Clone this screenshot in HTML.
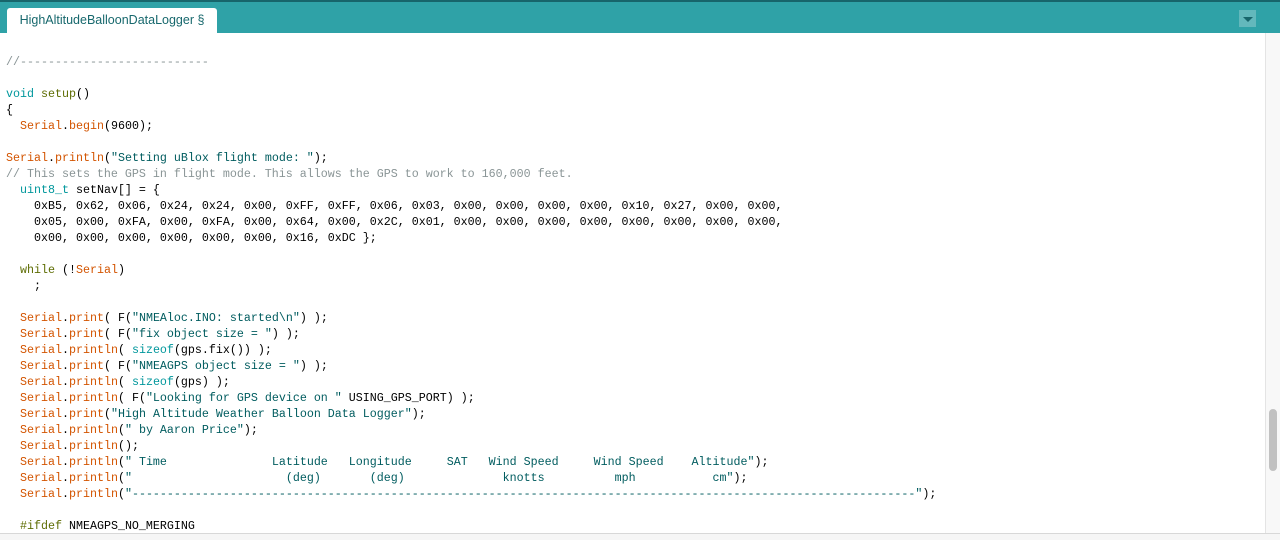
<!DOCTYPE html>
<html><head><meta charset="utf-8"><style>
*{margin:0;padding:0}
body{width:1280px;height:539px;overflow:hidden;background:#fff;position:relative;font-family:"Liberation Sans",sans-serif}
#top{position:absolute;left:0;top:0;width:1280px;height:2px;background:#17656b;z-index:3}
#bar{position:absolute;left:0;top:2px;width:1280px;height:31px;background:#2fa2a7;z-index:2}
#tab{position:absolute;left:7px;top:6px;width:210px;height:25px;background:#fff;border-radius:3px 3px 0 0;color:#17686d;font-size:12.5px;line-height:25px;text-align:center}
#dd{position:absolute;left:1239px;top:8px;width:17px;height:17px;background:#63b8bc}
#dd:after{content:"";position:absolute;left:4px;top:7px;border-left:5px solid transparent;border-right:5px solid transparent;border-top:5px solid #17656b}
pre{position:absolute;left:6px;top:22px;font-family:"Liberation Mono",monospace;font-size:11.67px;line-height:16px;color:#000}
.o{color:#d35400}.t{color:#00979c}.g{color:#5e6d03}.s{color:#005c5f}.c{color:#8a9596}
#sb{position:absolute;left:1265px;top:33px;width:15px;height:500px;background:#f8f8f8;border-left:1px solid #e4e4e4}
#th{position:absolute;left:1269px;top:409px;width:8px;height:62px;background:#c1c1c1;border-radius:4px}
#bot{position:absolute;left:0;top:533px;width:1280px;height:6px;background:#f6f6f6;border-top:1px solid #d8d8d8}
</style></head><body>
<div id="top"></div>
<div id="bar"><div id="tab">HighAltitudeBalloonDataLogger §</div><div id="dd"></div></div>
<pre>
x

<span class="c">//---------------------------</span>

<span class="t">void</span> <span class="g">setup</span>()
{
  <span class="o">Serial</span>.<span class="o">begin</span>(9600);

<span class="o">Serial</span>.<span class="o">println</span>(<span class="s">"Setting uBlox flight mode: "</span>);
<span class="c">// This sets the GPS in flight mode. This allows the GPS to work to 160,000 feet.</span>
  <span class="t">uint8_t</span> setNav[] = {
    0xB5, 0x62, 0x06, 0x24, 0x24, 0x00, 0xFF, 0xFF, 0x06, 0x03, 0x00, 0x00, 0x00, 0x00, 0x10, 0x27, 0x00, 0x00,
    0x05, 0x00, 0xFA, 0x00, 0xFA, 0x00, 0x64, 0x00, 0x2C, 0x01, 0x00, 0x00, 0x00, 0x00, 0x00, 0x00, 0x00, 0x00,
    0x00, 0x00, 0x00, 0x00, 0x00, 0x00, 0x16, 0xDC };

  <span class="g">while</span> (!<span class="o">Serial</span>)
    ;

  <span class="o">Serial</span>.<span class="o">print</span>( F(<span class="s">"NMEAloc.INO: started\n"</span>) );
  <span class="o">Serial</span>.<span class="o">print</span>( F(<span class="s">"fix object size = "</span>) );
  <span class="o">Serial</span>.<span class="o">println</span>( <span class="t">sizeof</span>(gps.fix()) );
  <span class="o">Serial</span>.<span class="o">print</span>( F(<span class="s">"NMEAGPS object size = "</span>) );
  <span class="o">Serial</span>.<span class="o">println</span>( <span class="t">sizeof</span>(gps) );
  <span class="o">Serial</span>.<span class="o">println</span>( F(<span class="s">"Looking for GPS device on "</span> USING_GPS_PORT) );
  <span class="o">Serial</span>.<span class="o">print</span>(<span class="s">"High Altitude Weather Balloon Data Logger"</span>);
  <span class="o">Serial</span>.<span class="o">println</span>(<span class="s">" by Aaron Price"</span>);
  <span class="o">Serial</span>.<span class="o">println</span>();
  <span class="o">Serial</span>.<span class="o">println</span>(<span class="s">" Time               Latitude   Longitude     SAT   Wind Speed     Wind Speed    Altitude"</span>);
  <span class="o">Serial</span>.<span class="o">println</span>(<span class="s">"                      (deg)       (deg)              knotts          mph           cm"</span>);
  <span class="o">Serial</span>.<span class="o">println</span>(<span class="s">"----------------------------------------------------------------------------------------------------------------"</span>);

  <span class="g">#ifdef</span> NMEAGPS_NO_MERGING
</pre>
<div id="sb"></div><div id="th"></div>
<div id="bot"></div>
</body></html>
